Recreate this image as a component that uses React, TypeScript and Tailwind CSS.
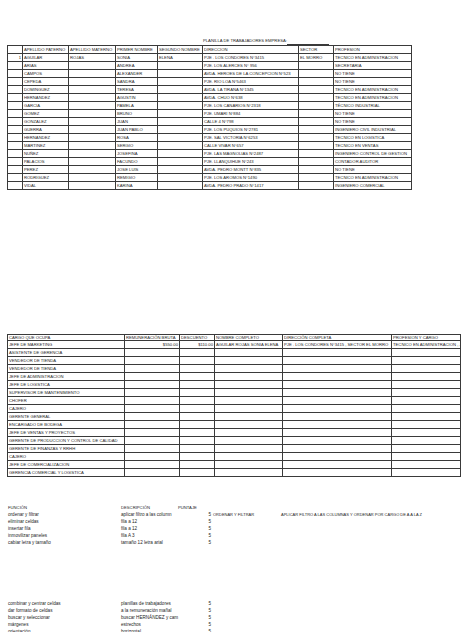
import React from "react"

const workers = [
  ["AGUILAR", "ROJAS", "SONIA", "ELENA", "PJE . LOS CONDORES N°3415", "EL MORRO", "TECNICO EN ADMINISTRACION"],
  ["ARIAS", "", "ANDREA", "", "PJE. LOS ALERCES N° 956", "", "SECRETARIA"],
  ["CAMPOS", "", "ALEXANDER", "", "AVDA. HEROES DE LA CONCEPCION N°523", "", "NO TIENE"],
  ["CEPEDA", "", "SANDRA", "", "PJE. RÍO LOA N°5463", "", "NO TIENE"],
  ["DOMINGUEZ", "", "TERESA", "", "AVDA. LA TIRANA N°1345", "", "TECNICO EN ADMINISTRACION"],
  ["HERNÁNDEZ", "", "AGUSTIN", "", "AVDA. CHUO N°638", "", "TECNICO EN ADMINISTRACION"],
  ["GARCIA", "", "PAMELA", "", "PJE. LOS CANARIOS N°2318", "", "TÉCNICO INDUSTRIAL"],
  ["GOMEZ", "", "BRUNO", "", "PJE. UMARÍ N°884", "", "NO TIENE"],
  ["GONZALEZ", "", "JUAN", "", "CALLE 4 N°798", "", "NO TIENE"],
  ["GUERRA", "", "JUAN PABLO", "", "PJE. LOS PUQUIOS N°2781", "", "INGENIERO CIVIL INDUSTRIAL"],
  ["HERNÁNDEZ", "", "ROSA", "", "PJE. SAL VICTORIA N°6253", "", "TECNICO EN LOGISTICA"],
  ["MARTINEZ", "", "SERGIO", "", "CALLE VIVAR N°657", "", "TECNICO EN VENTAS"],
  ["NUÑEZ", "", "JOSEFINA", "", "PJE. LAS MAGNOLIAS N°2487", "", "INGENIERO CONTROL DE GESTION"],
  ["PALACIOS", "", "FACUNDO", "", "PJE. LLANQUIHUE N°243", "", "CONTADOR AUDITOR"],
  ["PEREZ", "", "JOSE LUIS", "", "AVDA. PEDRO MONTT N°835", "", "NO TIENE"],
  ["RODRIGUEZ", "", "REMIGIO", "", "PJE. LOS AROMOS N°1490", "", "TECNICO EN ADMINISTRACION"],
  ["VIDAL", "", "KARINA", "", "AVDA. PEDRO PRADO N°1417", "", "INGENIERO COMERCIAL"],
]

const cargos = [
  "JEFE DE MARKETING",
  "ASISTENTE DE GERENCIA",
  "VENDEDOR DE TIENDA",
  "VENDEDOR DE TIENDA",
  "JEFE DE ADMINISTRACION",
  "JEFE DE LOGISTICA",
  "SUPERVISOR DE MANTENIMIENTO",
  "CHOFER",
  "CAJERO",
  "GERENTE GENERAL",
  "ENCARGADO DE BODEGA",
  "JEFE DE VENTAS Y PROYECTOS",
  "GERENTE DE PRODUCCION Y CONTROL DE CALIDAD",
  "GERENTE DE FINANZAS Y RRHH",
  "CAJERO",
  "JEFE DE COMERCIALIZACION",
  "GERENCIA COMERCIAL Y LOGISTICA",
]

const tasks1 = [
  ["ordenar y filtrar", "aplicar filtro a las column", "5", "ORDENAR Y FILTRAR", "APLICAR FILTRO A LAS COLUMNAS Y ORDENAR POR CARGO DE A A LA Z"],
  ["eliminar celdas", "fila a 12", "5", "", ""],
  ["insertar fila", "fila a 12", "5", "", ""],
  ["inmovilizar paneles", "fila A 3", "5", "", ""],
  ["cabiar letra y tamaño", "tamaño 12 letra arial", "5", "", ""],
]

const tasks2 = [
  ["combinar y centrar celdas", "planillas de trabajadores", "5"],
  ["dar formato de celdas", "a la remuneración mañal", "5"],
  ["buscar y seleccionar", "buscar HERNÁNDEZ y cam", "5"],
  ["márgenes", "estrechos", "5"],
  ["orientación", "horizontal", "5"],
]

const cell = "border-r border-b border-[#3a3a3a] h-[8px] leading-[8px] pl-[1px] whitespace-nowrap overflow-hidden"

function Cell({ children, right }: { children?: React.ReactNode; right?: boolean }) {
  return <div className={right ? cell + " text-right pr-[1px]" : cell}>{children}</div>
}

export default function App() {
  return (
    <div className="w-[474px] h-[632px] overflow-hidden bg-white text-[#262626] font-['Liberation_Sans',Arial,sans-serif] text-[4.2px]">
      <div className="pt-[37px] pl-[7px]">
        {/* planilla de trabajadores */}
        <div className="h-[8px] flex items-end pl-[196px] leading-[8px]">
          <span>PLANILLA DE TRABAJADORES EMPRESA:</span>
          <span className="w-[42px] h-[6px] border-b border-[#3a3a3a]" />
        </div>
        <div className="w-[405px] grid grid-cols-[15px_46px_47px_42px_45px_96px_35px_78px] border-l border-t border-[#3a3a3a]">
          <Cell />
          <Cell>APELLIDO PATERNO</Cell>
          <Cell>APELLIDO MATERNO</Cell>
          <Cell>PRIMER NOMBRE</Cell>
          <Cell>SEGUNDO NOMBRE</Cell>
          <Cell>DIRECCION</Cell>
          <Cell>SECTOR</Cell>
          <Cell>PROFESION</Cell>
          {workers.map((w, i) => (
            <React.Fragment key={i}>
              <Cell right>{i === 0 ? "1" : ""}</Cell>
              {w.map((v, j) => (
                <Cell key={j}>{v}</Cell>
              ))}
            </React.Fragment>
          ))}
        </div>

        {/* cargos */}
        <div className="mt-[144px] w-[454px] grid grid-cols-[117px_55px_35px_68px_109px_69px] border-l border-t border-[#3a3a3a]">
          {["CARGO QUE OCUPA", "REMUNERACIÓN BRUTA", "DESCUENTO", "NOMBRE COMPLETO", "DIRECCIÓN COMPLETA", "PROFESION Y CARGO"].map((h) => (
            <div key={h} className="border-r border-b border-[#3a3a3a] h-[6px] leading-[6px] pl-[1px] whitespace-nowrap overflow-hidden">
              {h}
            </div>
          ))}
          {cargos.map((c, i) => (
            <React.Fragment key={i}>
              <Cell>{c}</Cell>
              <Cell right>{i === 0 ? "$550.00" : ""}</Cell>
              <Cell right>{i === 0 ? "$110.00" : ""}</Cell>
              <Cell>{i === 0 ? "AGUILAR ROJAS SONIA ELENA" : ""}</Cell>
              <Cell>{i === 0 ? "PJE . LOS CONDORES N°3415 , SECTOR EL MORRO" : ""}</Cell>
              <Cell>{i === 0 ? "TECNICO EN ADMINISTRACION , J" : ""}</Cell>
            </React.Fragment>
          ))}
        </div>

        {/* funciones */}
        <div className="mt-[27px] grid grid-cols-[113px_57px_35px_68px_auto] auto-rows-[7px] leading-[7px] text-[4.6px] whitespace-nowrap">
          <div className="pl-[1px] text-[4.2px]">FUNCIÓN</div>
          <div className="pl-[1px] text-[4.2px]">DESCRIPCIÓN</div>
          <div className="pl-[1px] text-[4.2px]">PUNTAJE</div>
          <div />
          <div />
          {tasks1.map((t, i) => (
            <React.Fragment key={i}>
              <div className="pl-[1px]">{t[0]}</div>
              <div className="pl-[1px]">{t[1]}</div>
              <div className="text-right pr-[1px]">{t[2]}</div>
              <div className="pl-[1px] text-[4px]">{t[3]}</div>
              <div className="pl-[1px] text-[4px]">{t[4]}</div>
            </React.Fragment>
          ))}
        </div>
        <div className="mt-[54px] grid grid-cols-[113px_57px_35px] auto-rows-[7px] leading-[7px] text-[4.6px] whitespace-nowrap">
          {tasks2.map((t, i) => (
            <React.Fragment key={i}>
              <div className="pl-[1px]">{t[0]}</div>
              <div className="pl-[1px]">{t[1]}</div>
              <div className="text-right pr-[1px]">{t[2]}</div>
            </React.Fragment>
          ))}
        </div>
      </div>
    </div>
  )
}
